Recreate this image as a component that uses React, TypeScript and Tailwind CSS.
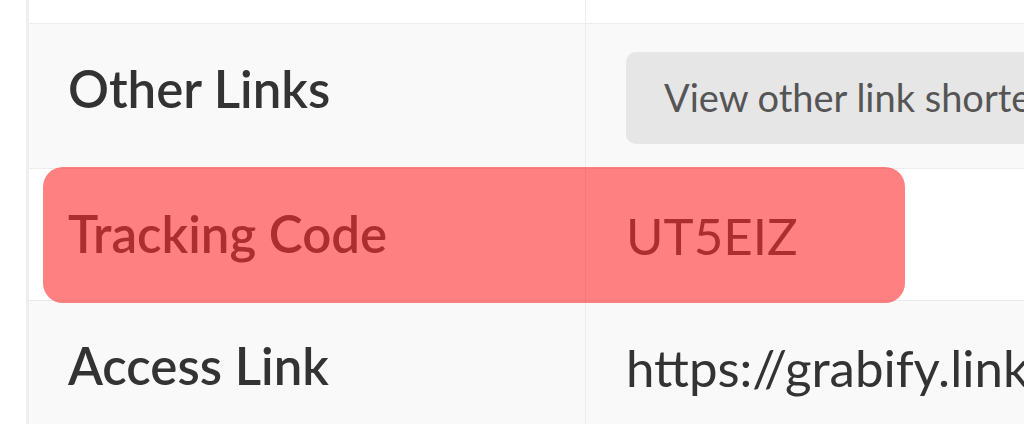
import React from 'react';

const rows = [
  { label: 'Other Links', kind: 'button', value: 'View other link shorteners' },
  { label: 'Tracking Code', kind: 'text', value: 'UT5EIZ' },
  { label: 'Access Link', kind: 'text', value: 'https://grabify.link/UT5EIZ' },
];

const App = () => {
  return (
    <div
      className="relative w-[1024px] h-[424px] overflow-hidden bg-white pl-[26px]"
      style={{ fontFamily: 'Lato, "Open Sans", sans-serif' }}
    >
      <div className="border-l-[3px] border-[#efefef] w-[1200px]">
        {/* top row, cut off */}
        <div className="flex h-[24px] bg-white border-b border-[#ececec]">
          <div className="w-[557px] shrink-0 border-r border-[#ececec]" />
          <div className="flex-1" />
        </div>

        {rows.map((row, i) => (
          <div
            key={row.label}
            className={`flex border-b border-[#ececec] ${
              i === 0 ? 'h-[145px] bg-[#f9f9f9]' : i === 1 ? 'h-[132px] bg-white' : 'h-[140px] bg-[#f9f9f9]'
            }`}
          >
            <div className="w-[557px] shrink-0 border-r border-[#ececec] pl-[39px] pt-[39px]">
              <span className="block text-[51px] font-semibold text-[#333] leading-none">{row.label}</span>
            </div>
            <div className="flex-1 min-w-0 pl-[40px]">
              {row.kind === 'button' ? (
                <div className="mt-[28px] h-[92px] rounded-[10px] bg-[#e6e6e6] pl-[38px] pr-8 pb-[3px] flex items-center">
                  <span className="text-[38px] text-[#555] leading-none whitespace-nowrap">{row.value}</span>
                </div>
              ) : (
                <span className="block pt-[41px] text-[51px] text-[#333] leading-none whitespace-nowrap">
                  {row.value}
                </span>
              )}
            </div>
          </div>
        ))}
      </div>

      {/* highlight overlay */}
      <div className="absolute left-[43px] top-[167px] w-[862px] h-[136px] rounded-[20px] bg-[#ff2b2b]/60" />
    </div>
  );
};

export default App;
